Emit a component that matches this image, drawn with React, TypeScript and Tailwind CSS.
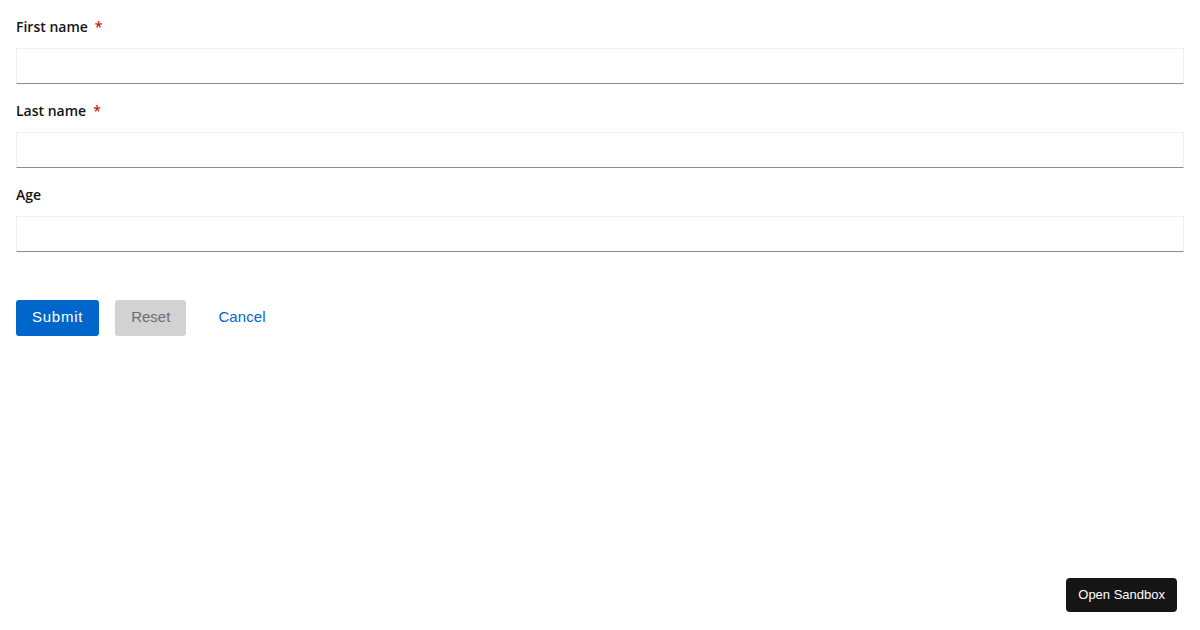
import React from "react";

function Field({ label, required }: { label: string; required?: boolean }) {
  return (
    <div className="flex flex-col">
      <div className="h-[32px] text-[14px] leading-[21px] font-semibold text-[#151515] [font-family:'Open_Sans',sans-serif]">
        {label}
        {required && <span className="ml-[7px] text-[#c9190b]">*</span>}
      </div>
      <input
        type="text"
        className="h-[36px] w-full border border-[#f0f0f0] border-b-[#8a8d90] bg-white px-2 outline-none"
      />
    </div>
  );
}

export default function App() {
  return (
    <div className="min-h-[630px] bg-white p-4 [font-family:'Liberation_Sans',sans-serif]">
      <div className="flex flex-col gap-4">
        <Field label="First name" required />
        <Field label="Last name" required />
        <Field label="Age" />
      </div>
      <div className="mt-[48px] flex gap-4">
        <button className="h-[36px] rounded-[3px] bg-[#0066cc] px-4 pb-[2px] text-[15px] text-white tracking-[0.75px]">
          Submit
        </button>
        <button className="h-[36px] rounded-[3px] bg-[#d2d2d2] px-4 pb-[2px] text-[15px] text-[#6a6e73] tracking-[0px]">
          Reset
        </button>
        <button className="h-[36px] px-4 pb-[2px] text-[15px] text-[#0066cc] tracking-[0.1px]">
          Cancel
        </button>
      </div>
      <button className="fixed right-[23px] bottom-[18px] h-[34px] rounded-[4px] bg-[#151515] px-[12px] text-[13px] text-white [font-family:'Liberation_Sans',sans-serif]">
        Open Sandbox
      </button>
    </div>
  );
}
